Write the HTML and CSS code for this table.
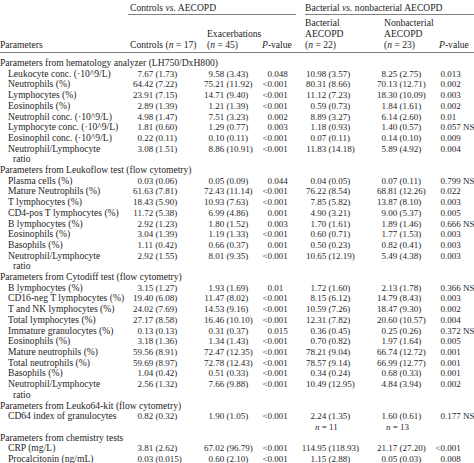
FILE: index.html
```html
<!DOCTYPE html>
<html>
<head>
<meta charset="utf-8">
<link rel="stylesheet" href="styles.css">
</head>
<body>
<table class="tbl">
<colgroup>
<col class="w1"><col class="w2"><col class="w3"><col class="w4"><col class="w5"><col class="w6"><col class="w7">
</colgroup>
<thead>
<tr class="h1">
<th></th>
<th colspan="3"><div class="grp g1">Controls <i>vs.</i> AECOPD</div></th>
<th colspan="3"><div class="grp g2">Bacterial <i>vs.</i> nonbacterial AECOPD</div></th>
</tr>
<tr class="h2">
<th></th><th></th><th></th><th></th>
<th class="hb">Bacterial</th><th class="hn">Nonbacterial</th><th></th>
</tr>
<tr class="h2">
<th></th><th></th><th class="he">Exacerbations</th><th></th>
<th class="hb">AECOPD</th><th class="hn">AECOPD</th><th></th>
</tr>
<tr class="h2 h4">
<th class="hp">Parameters</th><th class="hc">Controls (<i>n</i> = 17)</th><th class="he">(<i>n</i> = 45)</th><th class="hpv"><i>P</i>-value</th>
<th class="hb">(<i>n</i> = 22)</th><th class="hn">(<i>n</i> = 23)</th><th class="hpv2"><i>P</i>-value</th>
</tr>
</thead>
<tbody class="data">
<tr class="sec first"><td colspan="7">Parameters from hematology analyzer (LH750/DxH800)</td></tr>
<tr><td class="p">Leukocyte conc. (·10^9/L)</td><td><span class="i">7</span>.67 (1.73)</td><td><span class="i">9</span>.58 (3.43)</td><td><span class="i">0</span>.048</td><td><span class="i">10</span>.98 (3.57)</td><td><span class="i">8</span>.25 (2.75)</td><td><span class="i">0</span>.013</td></tr>
<tr><td class="p">Neutrophils (%)</td><td><span class="i">64</span>.42 (7.22)</td><td><span class="i">75</span>.21 (11.92)</td><td><span class="i">&lt;0</span>.001</td><td><span class="i">80</span>.31 (8.66)</td><td><span class="i">70</span>.13 (12.71)</td><td><span class="i">0</span>.002</td></tr>
<tr><td class="p">Lymphocytes (%)</td><td><span class="i">23</span>.91 (7.15)</td><td><span class="i">14</span>.71 (9.40)</td><td><span class="i">&lt;0</span>.001</td><td><span class="i">11</span>.12 (7.23)</td><td><span class="i">18</span>.30 (10.09)</td><td><span class="i">0</span>.003</td></tr>
<tr><td class="p">Eosinophils (%)</td><td><span class="i">2</span>.89 (1.39)</td><td><span class="i">1</span>.21 (1.39)</td><td><span class="i">&lt;0</span>.001</td><td><span class="i">0</span>.59 (0.73)</td><td><span class="i">1</span>.84 (1.61)</td><td><span class="i">0</span>.002</td></tr>
<tr><td class="p">Neutrophil conc. (·10^9/L)</td><td><span class="i">4</span>.98 (1.47)</td><td><span class="i">7</span>.51 (3.23)</td><td><span class="i">0</span>.002</td><td><span class="i">8</span>.89 (3.27)</td><td><span class="i">6</span>.14 (2.60)</td><td><span class="i">0</span>.01</td></tr>
<tr><td class="p">Lymphocyte conc. (·10^9/L)</td><td><span class="i">1</span>.81 (0.60)</td><td><span class="i">1</span>.29 (0.77)</td><td><span class="i">0</span>.003</td><td><span class="i">1</span>.18 (0.93)</td><td><span class="i">1</span>.40 (0.57)</td><td><span class="i">0</span>.057 NS</td></tr>
<tr><td class="p">Eosinophil conc. (·10^9/L)</td><td><span class="i">0</span>.22 (0.11)</td><td><span class="i">0</span>.10 (0.11)</td><td><span class="i">&lt;0</span>.001</td><td><span class="i">0</span>.07 (0.11)</td><td><span class="i">0</span>.14 (0.10)</td><td><span class="i">0</span>.009</td></tr>
<tr><td class="p">Neutrophil/Lymphocyte<br><span class="wrap">ratio</span></td><td><span class="i">3</span>.08 (1.51)</td><td><span class="i">8</span>.86 (10.91)</td><td><span class="i">&lt;0</span>.001</td><td><span class="i">11</span>.83 (14.18)</td><td><span class="i">5</span>.89 (4.92)</td><td><span class="i">0</span>.004</td></tr>

<tr class="sec"><td colspan="7">Parameters from Leukoflow test (flow cytometry)</td></tr>
<tr><td class="p">Plasma cells (%)</td><td><span class="i">0</span>.03 (0.06)</td><td><span class="i">0</span>.05 (0.09)</td><td><span class="i">0</span>.044</td><td><span class="i">0</span>.04 (0.05)</td><td><span class="i">0</span>.07 (0.11)</td><td><span class="i">0</span>.799 NS</td></tr>
<tr><td class="p">Mature Neutrophils (%)</td><td><span class="i">61</span>.63 (7.81)</td><td><span class="i">72</span>.43 (11.14)</td><td><span class="i">&lt;0</span>.001</td><td><span class="i">76</span>.22 (8.54)</td><td><span class="i">68</span>.81 (12.26)</td><td><span class="i">0</span>.022</td></tr>
<tr><td class="p">T lymphocytes (%)</td><td><span class="i">18</span>.43 (5.90)</td><td><span class="i">10</span>.93 (7.63)</td><td><span class="i">&lt;0</span>.001</td><td><span class="i">7</span>.85 (5.82)</td><td><span class="i">13</span>.87 (8.10)</td><td><span class="i">0</span>.003</td></tr>
<tr><td class="p">CD4-pos T lymphocytes (%)</td><td><span class="i">11</span>.72 (5.38)</td><td><span class="i">6</span>.99 (4.86)</td><td><span class="i">0</span>.001</td><td><span class="i">4</span>.90 (3.21)</td><td><span class="i">9</span>.00 (5.37)</td><td><span class="i">0</span>.005</td></tr>
<tr><td class="p">B lymphocytes (%)</td><td><span class="i">2</span>.92 (1.23)</td><td><span class="i">1</span>.80 (1.52)</td><td><span class="i">0</span>.003</td><td><span class="i">1</span>.70 (1.61)</td><td><span class="i">1</span>.89 (1.46)</td><td><span class="i">0</span>.666 NS</td></tr>
<tr><td class="p">Eosinophils (%)</td><td><span class="i">3</span>.04 (1.39)</td><td><span class="i">1</span>.19 (1.33)</td><td><span class="i">&lt;0</span>.001</td><td><span class="i">0</span>.60 (0.71)</td><td><span class="i">1</span>.77 (1.53)</td><td><span class="i">0</span>.003</td></tr>
<tr><td class="p">Basophils (%)</td><td><span class="i">1</span>.11 (0.42)</td><td><span class="i">0</span>.66 (0.37)</td><td><span class="i">0</span>.001</td><td><span class="i">0</span>.50 (0.23)</td><td><span class="i">0</span>.82 (0.41)</td><td><span class="i">0</span>.003</td></tr>
<tr><td class="p">Neutrophil/Lymphocyte<br><span class="wrap">ratio</span></td><td><span class="i">2</span>.92 (1.55)</td><td><span class="i">8</span>.01 (9.35)</td><td><span class="i">&lt;0</span>.001</td><td><span class="i">10</span>.65 (12.19)</td><td><span class="i">5</span>.49 (4.38)</td><td><span class="i">0</span>.003</td></tr>

<tr class="sec"><td colspan="7">Parameters from Cytodiff test (flow cytometry)</td></tr>
<tr><td class="p">B lymphocytes (%)</td><td><span class="i">3</span>.15 (1.27)</td><td><span class="i">1</span>.93 (1.69)</td><td><span class="i">0</span>.01</td><td><span class="i">1</span>.72 (1.60)</td><td><span class="i">2</span>.13 (1.78)</td><td><span class="i">0</span>.366 NS</td></tr>
<tr><td class="p">CD16-neg T lymphocytes (%)</td><td><span class="i">19</span>.40 (6.08)</td><td><span class="i">11</span>.47 (8.02)</td><td><span class="i">&lt;0</span>.001</td><td><span class="i">8</span>.15 (6.12)</td><td><span class="i">14</span>.79 (8.43)</td><td><span class="i">0</span>.003</td></tr>
<tr><td class="p">T and NK lymphocytes (%)</td><td><span class="i">24</span>.02 (7.69)</td><td><span class="i">14</span>.53 (9.16)</td><td><span class="i">&lt;0</span>.001</td><td><span class="i">10</span>.59 (7.26)</td><td><span class="i">18</span>.47 (9.30)</td><td><span class="i">0</span>.002</td></tr>
<tr><td class="p">Total lymphocytes (%)</td><td><span class="i">27</span>.17 (8.58)</td><td><span class="i">16</span>.46 (10.10)</td><td><span class="i">&lt;0</span>.001</td><td><span class="i">12</span>.31 (7.82)</td><td><span class="i">20</span>.60 (10.57)</td><td><span class="i">0</span>.004</td></tr>
<tr><td class="p">Immature granulocytes (%)</td><td><span class="i">0</span>.13 (0.13)</td><td><span class="i">0</span>.31 (0.37)</td><td><span class="i">0</span>.015</td><td><span class="i">0</span>.36 (0.45)</td><td><span class="i">0</span>.25 (0.26)</td><td><span class="i">0</span>.372 NS</td></tr>
<tr><td class="p">Eosinophils (%)</td><td><span class="i">3</span>.18 (1.36)</td><td><span class="i">1</span>.34 (1.43)</td><td><span class="i">&lt;0</span>.001</td><td><span class="i">0</span>.70 (0.82)</td><td><span class="i">1</span>.97 (1.64)</td><td><span class="i">0</span>.005</td></tr>
<tr><td class="p">Mature neutrophils (%)</td><td><span class="i">59</span>.56 (8.91)</td><td><span class="i">72</span>.47 (12.35)</td><td><span class="i">&lt;0</span>.001</td><td><span class="i">78</span>.21 (9.04)</td><td><span class="i">66</span>.74 (12.72)</td><td><span class="i">0</span>.001</td></tr>
<tr><td class="p">Total neutrophils (%)</td><td><span class="i">59</span>.69 (8.97)</td><td><span class="i">72</span>.78 (12.43)</td><td><span class="i">&lt;0</span>.001</td><td><span class="i">78</span>.57 (9.14)</td><td><span class="i">66</span>.99 (12.77)</td><td><span class="i">0</span>.001</td></tr>
<tr><td class="p">Basophils (%)</td><td><span class="i">1</span>.04 (0.42)</td><td><span class="i">0</span>.51 (0.33)</td><td><span class="i">&lt;0</span>.001</td><td><span class="i">0</span>.34 (0.24)</td><td><span class="i">0</span>.68 (0.33)</td><td><span class="i">0</span>.001</td></tr>
<tr><td class="p">Neutrophil/Lymphocyte<br><span class="wrap">ratio</span></td><td><span class="i">2</span>.56 (1.32)</td><td><span class="i">7</span>.66 (9.88)</td><td><span class="i">&lt;0</span>.001</td><td><span class="i">10</span>.49 (12.95)</td><td><span class="i">4</span>.84 (3.94)</td><td><span class="i">0</span>.002</td></tr>

<tr class="sec"><td colspan="7">Parameters from Leuko64-kit (flow cytometry)</td></tr>
<tr><td class="p">CD64 index of granulocytes</td><td><span class="i">0</span>.82 (0.32)</td><td><span class="i">1</span>.90 (1.05)</td><td><span class="i">&lt;0</span>.001</td><td><span class="i">2</span>.24 (1.35)</td><td><span class="i">1</span>.60 (0.61)</td><td><span class="i">0</span>.177 NS</td></tr>
<tr class="nrow"><td></td><td></td><td></td><td></td><td class="nb"><i>n</i> = 11</td><td class="nn"><i>n</i> = 13</td><td></td></tr>

<tr class="sec"><td colspan="7">Parameters from chemistry tests</td></tr>
<tr><td class="p">CRP (mg/L)</td><td><span class="i">3</span>.81 (2.62)</td><td><span class="i">67</span>.02 (96.79)</td><td><span class="i">&lt;0</span>.001</td><td><span class="i">114</span>.95 (118.93)</td><td><span class="i">21</span>.17 (27.20)</td><td><span class="i">&lt;0</span>.001</td></tr>
<tr><td class="p">Procalcitonin (ng/mL)</td><td><span class="i">0</span>.03 (0.015)</td><td><span class="i">0</span>.60 (2.10)</td><td><span class="i">&lt;0</span>.001</td><td><span class="i">1</span>.15 (2.88)</td><td><span class="i">0</span>.05 (0.03)</td><td><span class="i">0</span>.008</td></tr>
</tbody>
</table>
</body>
</html>
```

FILE: styles.css
```css
html, body {
  margin: 0;
  padding: 0;
  background: #ffffff;
}
body {
  font-family: "Liberation Serif", "Times New Roman", serif;
  font-size: 9.6px;
  color: #262626;
}
.tbl {
  table-layout: fixed;
  width: 474px;
  border-collapse: collapse;
  border-spacing: 0;
}
.w1 { width: 128px; }
.w2 { width: 76px; }
.w3 { width: 56px; }
.w4 { width: 40px; }
.w5 { width: 76px; }
.w6 { width: 58px; }
.w7 { width: 40px; }

th, td {
  padding: 0;
  font-weight: normal;
  text-align: left;
  white-space: nowrap;
  vertical-align: top;
}
thead th {
  line-height: 11px;
}
.h1 th {
  padding-top: 1.5px;
}
.grp {
  border-bottom: 1px solid #808080;
  padding-bottom: 1.5px;
}
.g1 { margin-right: 4px; padding-left: 2px; }
.g2 { margin-left: 5px; }
.h1 + .h2 th { padding-top: 1.5px; }
.h4 th {
  border-bottom: 1px solid #808080;
  padding-bottom: 2.5px;
}
.hc { padding-left: 2px; }
.h2 .he { padding-left: 3px; }
.h2 .hpv { padding-left: 2px; }
.h2 .hb { padding-left: 5px; }
.h2 .hn { padding-left: 8px; }
.h2 .hpv2 { padding-left: 5px; }

.data td {
  line-height: 10.7px;
  font-size: 9px;
}
.data td.p,
.data .sec td {
  font-size: 9.6px;
}
.data .sec.first td {
  padding-top: 5px;
}
.data td.p {
  padding-left: 8px;
}
.wrap {
  padding-left: 5px;
}
.i {
  display: inline-block;
  text-align: right;
}
.data td:nth-child(2) .i { width: 14px; }
.data td:nth-child(3) .i { width: 9px; }
.data td:nth-child(4) .i { width: 12px; }
.data td:nth-child(5) .i { width: 15px; }
.data td:nth-child(6) .i { width: 10px; }
.data td:nth-child(7) .i { width: 11px; }
.data td.nb { padding-left: 15px; }
.data td.nn { padding-left: 10px; }
```
